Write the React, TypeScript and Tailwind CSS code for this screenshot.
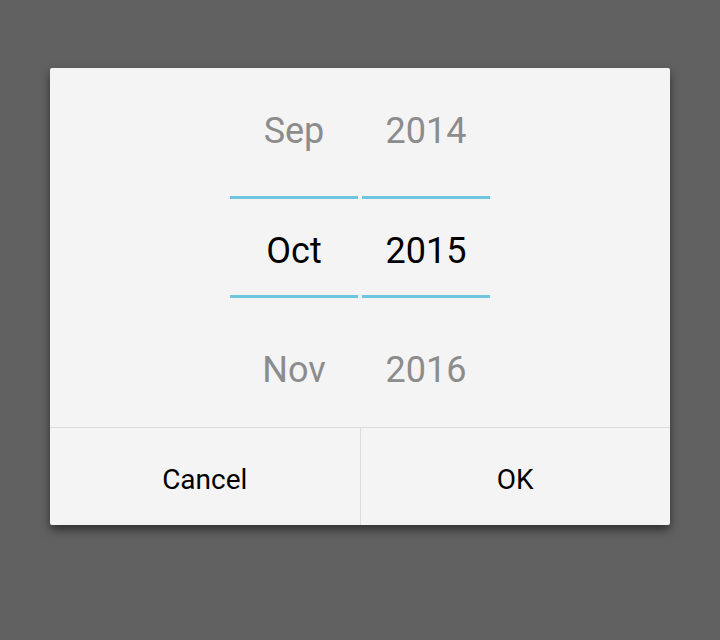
import React from 'react';

const months = ['Sep', 'Oct', 'Nov'];
const years = ['2014', '2015', '2016'];

const PickerColumn: React.FC<{ values: string[] }> = ({ values }) => (
  <div className="w-[128px] flex flex-col">
    <div className="h-[120px] flex items-center justify-center pt-[6px] text-[36px] text-[#8c8c8c]">
      {values[0]}
    </div>
    <div className="h-[120px] flex flex-col pt-[8px] pb-[9px]">
      <div className="h-[3px] bg-[#6ec5df]" />
      <div className="flex-1 flex items-center justify-center text-[36px] text-black pt-[7px]">
        {values[1]}
      </div>
      <div className="h-[3px] bg-[#6ec5df]" />
    </div>
    <div className="h-[120px] flex items-center justify-center pt-[6px] text-[36px] text-[#8c8c8c]">
      {values[2]}
    </div>
  </div>
);

export default function App() {
  return (
    <div
      className="w-[720px] h-[640px] bg-[#616161] pt-[68px] pl-[50px]"
      style={{ fontFamily: 'Roboto, "Liberation Sans", sans-serif' }}
    >
      <div className="w-[620px] h-[457px] bg-[#f4f4f4] rounded-[2px] shadow-[0_5px_10px_rgba(0,0,0,0.5)] flex flex-col">
        <div className="h-[360px] flex justify-center gap-[4px] border-b border-[#dcdcdc]">
          <PickerColumn values={months} />
          <PickerColumn values={years} />
        </div>
        <div className="flex-1 flex">
          <button className="flex-1 flex items-center justify-center pt-[6px] text-[28px] text-black border-r border-[#dcdcdc]">
            Cancel
          </button>
          <button className="flex-1 flex items-center justify-center pt-[6px] text-[28px] text-black">
            OK
          </button>
        </div>
      </div>
    </div>
  );
}
